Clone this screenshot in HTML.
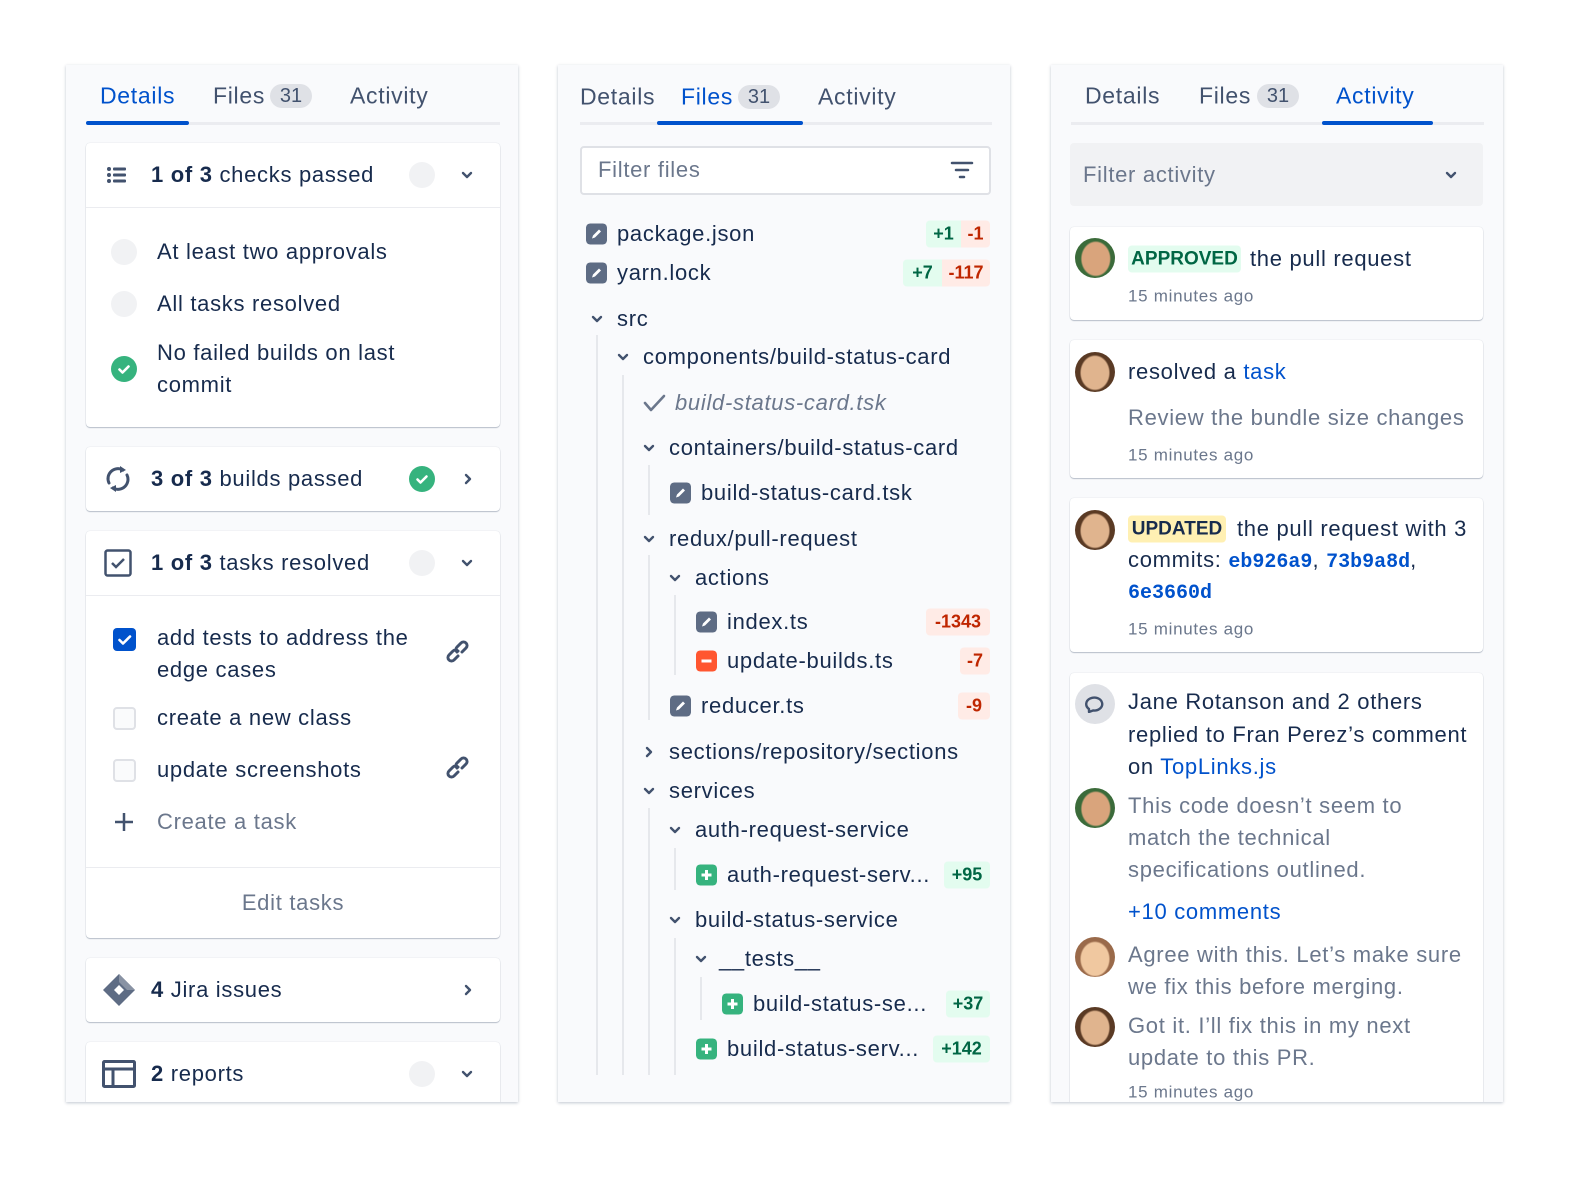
<!DOCTYPE html>
<html><head><meta charset="utf-8"><style>
*{margin:0;padding:0;box-sizing:border-box}
body{width:1589px;height:1187px;background:#fff;font-family:"Liberation Sans",sans-serif;color:#172b4d;position:relative;overflow:hidden}
.p{position:absolute;top:65px;width:452px;height:1037px;background:#f9fafc;box-shadow:0 1px 3px rgba(9,30,66,.25);overflow:hidden}
.t{position:absolute;white-space:nowrap;line-height:1;transform:translateY(-50%);font-size:22px;letter-spacing:0.7px}
.g{color:#6b778c}.b{color:#0052cc}
.card{position:absolute;background:#fff;border-radius:4px;box-shadow:0 1px 1px rgba(9,30,66,.25),0 0 1px rgba(9,30,66,.2)}
.abs{position:absolute}
.circ{position:absolute;width:26px;height:26px;border-radius:50%;background:#f1f2f4;transform:translate(-50%,-50%)}
.badge{position:absolute;height:24px;border-radius:12px;background:#dfe1e6;font-size:20px;line-height:24px;text-align:center;transform:translateY(-50%)}
.ic{position:absolute;width:21px;height:21px;border-radius:4px;transform:translateY(-50%)}
.lozg,.lozr{position:absolute;height:27px;font-size:18px;font-weight:bold;line-height:27px;text-align:center;transform:translateY(-50%)}
.lozg{background:#e3fcef;color:#006644}.lozr{background:#ffebe6;color:#bf2600}
.vl{position:absolute;width:2px;background:#e6e8ec}
.av{position:absolute;width:40px;height:40px;border-radius:50%;transform:translate(-50%,-50%);background:radial-gradient(ellipse 38% 45% at 50% 52%,#e0b48e 0 90%,#5a3a24 100%)}
.av2{background:radial-gradient(ellipse 38% 45% at 52% 52%,#d9a47c 0 90%,#3b6b3a 100%)}
.av3{background:radial-gradient(ellipse 38% 45% at 50% 55%,#f0c8a0 0 90%,#9a6a4a 100%)}
</style></head><body>

<svg width="0" height="0" style="position:absolute"><defs>
<symbol id="chd" viewBox="0 0 14 14"><path d="M3 5l4 4 4-4" fill="none" stroke="#42526e" stroke-width="2.4" stroke-linecap="round" stroke-linejoin="round"/></symbol>
<symbol id="chr" viewBox="0 0 14 14"><path d="M5 3l4 4-4 4" fill="none" stroke="#42526e" stroke-width="2.4" stroke-linecap="round" stroke-linejoin="round"/></symbol>
<symbol id="pen" viewBox="0 0 21 21"><rect width="21" height="21" rx="4" fill="#5e6c84"/><path d="M6 15l1-3 6-6 2 2-6 6z" fill="#fff"/></symbol>
<symbol id="add" viewBox="0 0 21 21"><rect width="21" height="21" rx="4" fill="#36b37e"/><path d="M10.5 5.5v10M5.5 10.5h10" stroke="#fff" stroke-width="3"/></symbol>
<symbol id="rem" viewBox="0 0 21 21"><rect width="21" height="21" rx="4" fill="#ff5630"/><path d="M5.5 10.5h10" stroke="#fff" stroke-width="3"/></symbol>
<symbol id="ok" viewBox="0 0 26 26"><circle cx="13" cy="13" r="13" fill="#36b37e"/><path d="M8.5 13.5l3 3 6-6" fill="none" stroke="#fff" stroke-width="2.6" stroke-linecap="round" stroke-linejoin="round"/></symbol>
<symbol id="link" viewBox="0 0 30 30"><g fill="none" stroke="#42526e" stroke-width="3" stroke-linecap="round"><path d="M13 17l-4 4a3.5 3.5 0 0 1-5-5l4-4a3.5 3.5 0 0 1 5 0"/><path d="M17 13l4-4a3.5 3.5 0 0 0-5-5l-4 4a3.5 3.5 0 0 0 0 5"/></g></symbol>
</defs></svg>

<!-- LEFT PANEL -->
<div class="p" style="left:66px">
 <div class="t b" style="left:34px;top:31px;font-size:23px">Details</div>
 <div class="t" style="left:147px;top:31px;font-size:23px;color:#42526e">Files</div>
 <div class="badge" style="left:204px;top:31px;width:42px;color:#42526e">31</div>
 <div class="t" style="left:284px;top:31px;font-size:23px;color:#42526e">Activity</div>
 <div class="abs" style="left:123px;top:57px;width:311px;height:3px;background:#ebecf0"></div>
 <div class="abs" style="left:20px;top:56px;width:103px;height:4px;background:#0052cc;border-radius:2px"></div>

 <div class="card" style="left:20px;top:78px;width:414px;height:284px">
  <svg class="abs" style="left:20px;top:22px" width="22" height="20"><g fill="#42526e"><circle cx="3" cy="4" r="2"/><circle cx="3" cy="10" r="2"/><circle cx="3" cy="16" r="2"/><rect x="7" y="2.5" width="13" height="3" rx="1"/><rect x="7" y="8.5" width="13" height="3" rx="1"/><rect x="7" y="14.5" width="13" height="3" rx="1"/></g></svg>
  <div class="t" style="left:65px;top:32px"><b>1 of 3</b> checks passed</div>
  <div class="circ" style="left:336px;top:32px"></div>
  <svg class="abs" style="left:374px;top:25px" width="14" height="14"><use href="#chd"/></svg>
  <div class="abs" style="left:0;top:64px;width:414px;height:1px;background:#ebecf0"></div>
  <div class="circ" style="left:38px;top:109px"></div>
  <div class="t" style="left:71px;top:109px">At least two approvals</div>
  <div class="circ" style="left:38px;top:161px"></div>
  <div class="t" style="left:71px;top:161px">All tasks resolved</div>
  <svg class="abs" style="left:25px;top:213px" width="26" height="26"><use href="#ok"/></svg>
  <div class="t" style="left:71px;top:210px">No failed builds on last</div>
  <div class="t" style="left:71px;top:242px">commit</div>
 </div>

 <div class="card" style="left:20px;top:382px;width:414px;height:64px">
  <svg class="abs" style="left:17px;top:16px" width="30" height="32" viewBox="0 0 30 32"><g fill="none" stroke="#42526e" stroke-width="3" stroke-linecap="round"><path d="M6 20a10 10 0 0 1 14-13"/><path d="M24 12a10 10 0 0 1-14 13"/></g><path d="M17 3l6 4-6 3z" fill="#42526e"/><path d="M13 29l-6-4 6-3z" fill="#42526e"/></svg>
  <div class="t" style="left:65px;top:32px"><b>3 of 3</b> builds passed</div>
  <svg class="abs" style="left:323px;top:19px" width="26" height="26"><use href="#ok"/></svg>
  <svg class="abs" style="left:375px;top:25px" width="14" height="14"><use href="#chr"/></svg>
 </div>

 <div class="card" style="left:20px;top:466px;width:414px;height:407px">
  <svg class="abs" style="left:18px;top:18px" width="28" height="28"><rect x="1.5" y="1.5" width="25" height="25" rx="2" fill="none" stroke="#42526e" stroke-width="2.5"/><path d="M8 14l4 4 8-8" fill="none" stroke="#42526e" stroke-width="2.5"/></svg>
  <div class="t" style="left:65px;top:32px"><b>1 of 3</b> tasks resolved</div>
  <div class="circ" style="left:336px;top:32px"></div>
  <svg class="abs" style="left:374px;top:25px" width="14" height="14"><use href="#chd"/></svg>
  <div class="abs" style="left:0;top:64px;width:414px;height:1px;background:#ebecf0"></div>
  <svg class="abs" style="left:27px;top:97px" width="24" height="24"><rect width="23" height="23" rx="4" fill="#0052cc"/><path d="M6.5 12l3.5 3.5 7-7" fill="none" stroke="#fff" stroke-width="2.6" stroke-linecap="round" stroke-linejoin="round"/></svg>
  <div class="t" style="left:71px;top:107px">add tests to address the</div>
  <div class="t" style="left:71px;top:139px">edge cases</div>
  <svg class="abs" style="left:359px;top:108px" width="30" height="30"><use href="#link"/></svg>
  <div class="abs" style="left:27px;top:176px;width:23px;height:23px;border:2px solid #dfe1e6;border-radius:4px;background:#fafbfc"></div>
  <div class="t" style="left:71px;top:187px">create a new class</div>
  <div class="abs" style="left:27px;top:228px;width:23px;height:23px;border:2px solid #dfe1e6;border-radius:4px;background:#fafbfc"></div>
  <div class="t" style="left:71px;top:239px">update screenshots</div>
  <svg class="abs" style="left:359px;top:224px" width="30" height="30"><use href="#link"/></svg>
  <svg class="abs" style="left:28px;top:281px" width="20" height="20"><path d="M10 1v18M1 10h18" stroke="#42526e" stroke-width="2.5"/></svg>
  <div class="t g" style="left:71px;top:291px">Create a task</div>
  <div class="abs" style="left:0;top:336px;width:414px;height:1px;background:#ebecf0"></div>
  <div class="t g" style="left:0;width:414px;text-align:center;top:372px">Edit tasks</div>
 </div>

 <div class="card" style="left:20px;top:893px;width:414px;height:64px">
  <svg class="abs" style="left:16px;top:15px" width="34" height="34" viewBox="0 0 34 34"><path d="M17 1L33 17 17 33 1 17z" fill="#5e6c84"/><path d="M17 12l5 5-5 5-5-5z" fill="#fff"/><path d="M17 1L33 17 25 17 17 9z" fill="#8993a4"/></svg>
  <div class="t" style="left:65px;top:32px"><b>4</b> Jira issues</div>
  <svg class="abs" style="left:375px;top:25px" width="14" height="14"><use href="#chr"/></svg>
 </div>

 <div class="card" style="left:20px;top:977px;width:414px;height:80px">
  <svg class="abs" style="left:16px;top:18px" width="34" height="28"><rect x="1.5" y="1.5" width="31" height="25" rx="1" fill="none" stroke="#42526e" stroke-width="3"/><path d="M1.5 9h31M11 9v18" stroke="#42526e" stroke-width="3"/></svg>
  <div class="t" style="left:65px;top:32px"><b>2</b> reports</div>
  <div class="circ" style="left:336px;top:32px"></div>
  <svg class="abs" style="left:374px;top:25px" width="14" height="14"><use href="#chd"/></svg>
 </div>
</div>

<!-- MIDDLE PANEL -->
<div class="p" style="left:558px">
 <div class="t" style="left:22px;top:32px;font-size:23px;color:#42526e">Details</div>
 <div class="t b" style="left:123px;top:32px;font-size:23px">Files</div>
 <div class="badge" style="left:180px;top:32px;width:42px;color:#42526e">31</div>
 <div class="t" style="left:260px;top:32px;font-size:23px;color:#42526e">Activity</div>
 <div class="abs" style="left:22px;top:57px;width:412px;height:3px;background:#ebecf0"></div>
 <div class="abs" style="left:99px;top:56px;width:146px;height:4px;background:#0052cc;border-radius:2px"></div>
 <div class="abs" style="left:22px;top:81px;width:411px;height:49px;border:2px solid #dfe1e6;border-radius:4px;background:#fff"></div>
 <div class="t g" style="left:40px;top:105px">Filter files</div>
 <svg class="abs" style="left:392px;top:96px" width="24" height="20"><g stroke="#42526e" stroke-width="2.5" stroke-linecap="round"><path d="M2 2h20M6 9h12M10 16h4"/></g></svg>

 <div class="vl" style="left:38px;top:270px;height:740px"></div>
 <div class="vl" style="left:64px;top:310px;height:700px"></div>
 <div class="vl" style="left:90px;top:400px;height:50px"></div>
 <div class="vl" style="left:90px;top:490px;height:165px"></div>
 <div class="vl" style="left:90px;top:743px;height:267px"></div>
 <div class="vl" style="left:116px;top:530px;height:80px"></div>
 <div class="vl" style="left:116px;top:783px;height:42px"></div>
 <div class="vl" style="left:116px;top:873px;height:137px"></div>
 <div class="vl" style="left:142px;top:912px;height:43px"></div>

 <svg class="ic" style="left:28px;top:169px"><use href="#pen"/></svg>
 <div class="t" style="left:59px;top:169px">package.json</div>
 <div class="lozg" style="left:368px;top:169px;width:35px;border-radius:4px 0 0 4px">+1</div>
 <div class="lozr" style="left:403px;top:169px;width:29px;border-radius:0 4px 4px 0">-1</div>
 <svg class="ic" style="left:28px;top:208px"><use href="#pen"/></svg>
 <div class="t" style="left:59px;top:208px">yarn.lock</div>
 <div class="lozg" style="left:345px;top:208px;width:39px;border-radius:4px 0 0 4px">+7</div>
 <div class="lozr" style="left:384px;top:208px;width:48px;border-radius:0 4px 4px 0">-117</div>

 <svg class="abs" style="left:32px;top:247px" width="14" height="14"><use href="#chd"/></svg>
 <div class="t" style="left:59px;top:254px">src</div>
 <svg class="abs" style="left:58px;top:285px" width="14" height="14"><use href="#chd"/></svg>
 <div class="t" style="left:85px;top:292px">components/build-status-card</div>
 <svg class="abs" style="left:85px;top:328px" width="24" height="20"><path d="M2 10l6 7L21 3" fill="none" stroke="#6b778c" stroke-width="2.6" stroke-linecap="round" stroke-linejoin="round"/></svg>
 <div class="t g" style="left:117px;top:338px;font-style:italic">build-status-card.tsk</div>
 <svg class="abs" style="left:84px;top:376px" width="14" height="14"><use href="#chd"/></svg>
 <div class="t" style="left:111px;top:383px">containers/build-status-card</div>
 <svg class="ic" style="left:112px;top:428px"><use href="#pen"/></svg>
 <div class="t" style="left:143px;top:428px">build-status-card.tsk</div>
 <svg class="abs" style="left:84px;top:467px" width="14" height="14"><use href="#chd"/></svg>
 <div class="t" style="left:111px;top:474px">redux/pull-request</div>
 <svg class="abs" style="left:110px;top:506px" width="14" height="14"><use href="#chd"/></svg>
 <div class="t" style="left:137px;top:513px">actions</div>
 <svg class="ic" style="left:138px;top:557px"><use href="#pen"/></svg>
 <div class="t" style="left:169px;top:557px">index.ts</div>
 <div class="lozr" style="left:368px;top:557px;width:64px;border-radius:4px">-1343</div>
 <svg class="ic" style="left:138px;top:596px"><use href="#rem"/></svg>
 <div class="t" style="left:169px;top:596px">update-builds.ts</div>
 <div class="lozr" style="left:402px;top:596px;width:30px;border-radius:4px">-7</div>
 <svg class="ic" style="left:112px;top:641px"><use href="#pen"/></svg>
 <div class="t" style="left:143px;top:641px">reducer.ts</div>
 <div class="lozr" style="left:400px;top:641px;width:32px;border-radius:4px">-9</div>
 <svg class="abs" style="left:84px;top:680px" width="14" height="14"><use href="#chr"/></svg>
 <div class="t" style="left:111px;top:687px">sections/repository/sections</div>
 <svg class="abs" style="left:84px;top:719px" width="14" height="14"><use href="#chd"/></svg>
 <div class="t" style="left:111px;top:726px">services</div>
 <svg class="abs" style="left:110px;top:758px" width="14" height="14"><use href="#chd"/></svg>
 <div class="t" style="left:137px;top:765px">auth-request-service</div>
 <svg class="ic" style="left:138px;top:810px"><use href="#add"/></svg>
 <div class="t" style="left:169px;top:810px">auth-request-serv...</div>
 <div class="lozg" style="left:386px;top:810px;width:46px;border-radius:4px">+95</div>
 <svg class="abs" style="left:110px;top:848px" width="14" height="14"><use href="#chd"/></svg>
 <div class="t" style="left:137px;top:855px">build-status-service</div>
 <svg class="abs" style="left:136px;top:887px" width="14" height="14"><use href="#chd"/></svg>
 <div class="t" style="left:161px;top:894px">__tests__</div>
 <svg class="ic" style="left:164px;top:939px"><use href="#add"/></svg>
 <div class="t" style="left:195px;top:939px">build-status-se...</div>
 <div class="lozg" style="left:388px;top:939px;width:44px;border-radius:4px">+37</div>
 <svg class="ic" style="left:138px;top:984px"><use href="#add"/></svg>
 <div class="t" style="left:169px;top:984px">build-status-serv...</div>
 <div class="lozg" style="left:375px;top:984px;width:57px;border-radius:4px">+142</div>
</div>

<!-- RIGHT PANEL -->
<div class="p" style="left:1051px">
 <div class="t" style="left:34px;top:31px;font-size:23px;color:#42526e">Details</div>
 <div class="t" style="left:148px;top:31px;font-size:23px;color:#42526e">Files</div>
 <div class="badge" style="left:206px;top:31px;width:42px;color:#42526e">31</div>
 <div class="t b" style="left:285px;top:31px;font-size:23px">Activity</div>
 <div class="abs" style="left:20px;top:57px;width:413px;height:3px;background:#ebecf0"></div>
 <div class="abs" style="left:271px;top:56px;width:111px;height:4px;background:#0052cc;border-radius:2px"></div>
 <div class="abs" style="left:19px;top:78px;width:413px;height:63px;background:#f1f2f4;border-radius:4px"></div>
 <div class="t g" style="left:32px;top:110px">Filter activity</div>
 <svg class="abs" style="left:393px;top:103px" width="14" height="14"><use href="#chd"/></svg>

 <div class="card" style="left:19px;top:162px;width:413px;height:93px"></div>
 <div class="av av2" style="left:44px;top:193px"></div>
 <div class="lozg" style="left:77px;top:194px;width:113px;border-radius:4px;font-size:19px">APPROVED</div>
 <div class="t" style="left:199px;top:194px">the pull request</div>
 <div class="t g" style="left:77px;top:231px;font-size:17px">15 minutes ago</div>

 <div class="card" style="left:19px;top:275px;width:413px;height:138px"></div>
 <div class="av" style="left:44px;top:307px"></div>
 <div class="t" style="left:77px;top:307px">resolved a <span class="b">task</span></div>
 <div class="t g" style="left:77px;top:353px">Review the bundle size changes</div>
 <div class="t g" style="left:77px;top:390px;font-size:17px">15 minutes ago</div>

 <div class="card" style="left:19px;top:433px;width:413px;height:154px"></div>
 <div class="av" style="left:44px;top:465px"></div>
 <div class="lozg" style="left:77px;top:464px;width:98px;border-radius:4px;background:#fff0b3;color:#172b4d;font-size:19px">UPDATED</div>
 <div class="t" style="left:186px;top:464px">the pull request with 3</div>
 <div class="t" style="left:77px;top:496px">commits: <b class="b" style="font-family:'Liberation Mono',monospace;font-size:20px;letter-spacing:0">eb926a9</b>, <b class="b" style="font-family:'Liberation Mono',monospace;font-size:20px;letter-spacing:0">73b9a8d</b>,</div>
 <div class="t b" style="left:77px;top:529px;font-family:'Liberation Mono',monospace;font-weight:bold;font-size:20px;letter-spacing:0">6e3660d</div>
 <div class="t g" style="left:77px;top:564px;font-size:17px">15 minutes ago</div>

 <div class="card" style="left:19px;top:608px;width:413px;height:450px"></div>
 <div class="av" style="left:44px;top:639px;background:#dfe1e6"></div>
 <svg class="abs" style="left:34px;top:630px" width="20" height="18"><path d="M4 14a8 6.5 0 1 1 4 1.5L4 17z" fill="none" stroke="#42526e" stroke-width="2.4" stroke-linejoin="round"/></svg>
 <div class="t" style="left:77px;top:637px">Jane Rotanson and 2 others</div>
 <div class="t" style="left:77px;top:670px">replied to Fran Perez’s comment</div>
 <div class="t" style="left:77px;top:702px">on <span class="b">TopLinks.js</span></div>
 <div class="av av2" style="left:44px;top:743px"></div>
 <div class="t g" style="left:77px;top:741px">This code doesn’t seem to</div>
 <div class="t g" style="left:77px;top:773px">match the technical</div>
 <div class="t g" style="left:77px;top:805px">specifications outlined.</div>
 <div class="t b" style="left:77px;top:847px">+10 comments</div>
 <div class="av av3" style="left:44px;top:892px"></div>
 <div class="t g" style="left:77px;top:890px">Agree with this. Let’s make sure</div>
 <div class="t g" style="left:77px;top:922px">we fix this before merging.</div>
 <div class="av" style="left:44px;top:962px"></div>
 <div class="t g" style="left:77px;top:961px">Got it. I’ll fix this in my next</div>
 <div class="t g" style="left:77px;top:993px">update to this PR.</div>
 <div class="t g" style="left:77px;top:1027px;font-size:17px">15 minutes ago</div>
</div>
</body></html>
